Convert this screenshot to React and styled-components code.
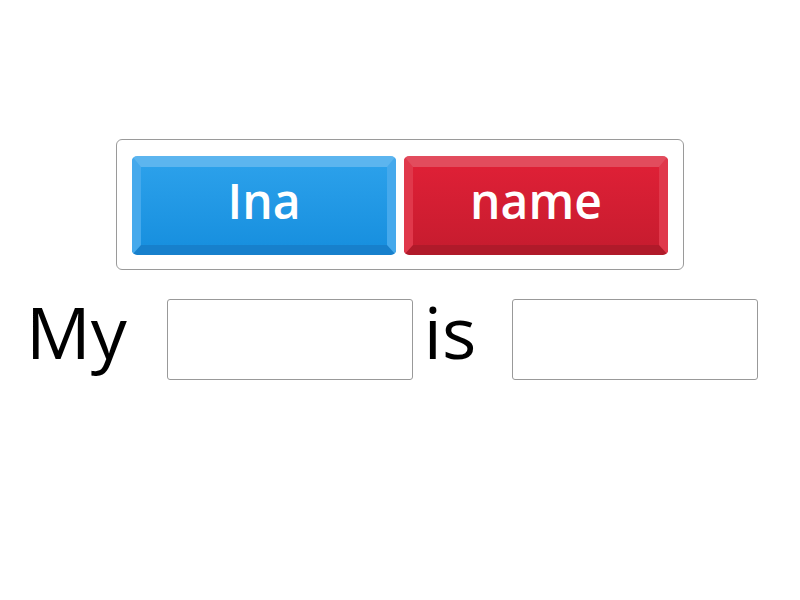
import React from 'react'
import styled, { createGlobalStyle } from 'styled-components'

const Global = createGlobalStyle`
  html, body {
    margin: 0;
    padding: 0;
    background: #fff;
  }
  body {
    font-family: "Open Sans", "Liberation Sans", sans-serif;
  }
`

const Page = styled.div`
  width: 800px;
  height: 600px;
  padding-top: 139px;
  box-sizing: border-box;
`

const Tray = styled.div`
  width: 568px;
  height: 131px;
  box-sizing: border-box;
  margin: 0 auto;
  padding: 16px 15px 0 15px;
  border: 1px solid #9a9a9a;
  border-radius: 6px;
  display: flex;
  gap: 8px;
`

const palette = {
  blue: {
    top: '#5cb5ef',
    side: '#45a9ec',
    bottom: '#1780cc',
    from: '#2ba0ea',
    to: '#1890df',
  },
  red: {
    top: '#e24c5d',
    side: '#e0384b',
    bottom: '#b01a2a',
    from: '#de2036',
    to: '#c81c2f',
  },
}

const Tile = styled.div`
  width: 264px;
  height: 99px;
  box-sizing: border-box;
  border-radius: 5px;
  border-style: solid;
  border-width: 11px 9px 10px 9px;
  border-color: ${p => palette[p.$tone].top} ${p => palette[p.$tone].side}
    ${p => palette[p.$tone].bottom} ${p => palette[p.$tone].side};
  background: linear-gradient(${p => palette[p.$tone].from}, ${p => palette[p.$tone].to});
  display: flex;
  align-items: center;
  justify-content: center;
  color: #fff;
  font-size: 48px;
  font-weight: 600;
  line-height: 1;
  padding-bottom: 10px;
`

const Sentence = styled.div`
  display: flex;
  align-items: center;
  margin-top: 29px;
  padding-left: 26px;
`

const Word = styled.span`
  font-size: 72px;
  line-height: 81px;
  color: #000;
  margin-right: ${p => p.$gap}px;
  position: relative;
  top: -8px;
`

const Blank = styled.div`
  width: 246px;
  height: 81px;
  box-sizing: border-box;
  border: 1px solid #999;
  border-radius: 3px;
  background: #fff;
  margin-right: ${p => p.$gap || 0}px;
`

export default function App() {
  return (
    <Page>
      <Global />
      <Tray>
        <Tile $tone="blue">Ina</Tile>
        <Tile $tone="red">name</Tile>
      </Tray>
      <Sentence>
        <Word $gap={40}>My</Word>
        <Blank $gap={11} />
        <Word $gap={36}>is</Word>
        <Blank />
      </Sentence>
    </Page>
  )
}
